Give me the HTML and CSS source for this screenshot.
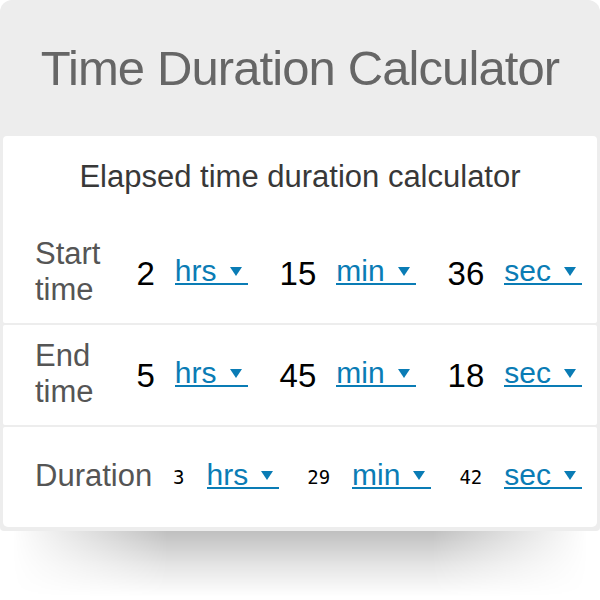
FILE: index.html
```html
<!DOCTYPE html>
<html lang="en">
<head>
    <meta charset="UTF-8">
    <meta name="viewport" content="width=device-width, initial-scale=1.0">
    <title>Time Duration Calculator</title>
    <link rel="stylesheet" href="styles.css">
</head>
<body>

    <div class="calc">
        <div class="calcHeader">
            <h1>Time Duration Calculator</h1>
        </div>

        <div class="calcBody">
            <section class="block blockFirst">
                <p class="subtitle">Elapsed time duration calculator</p>
                <div class="row">
                    <div class="label">Start<br>time</div>
                    <span class="num">2</span>
                    <span class="unit">hrs<i class="caret"></i></span>
                    <span class="num">15</span>
                    <span class="unit">min<i class="caret"></i></span>
                    <span class="num">36</span>
                    <span class="unit">sec<i class="caret"></i></span>
                </div>
            </section>

            <section class="block">
                <div class="row">
                    <div class="label">End<br>time</div>
                    <span class="num">5</span>
                    <span class="unit">hrs<i class="caret"></i></span>
                    <span class="num">45</span>
                    <span class="unit">min<i class="caret"></i></span>
                    <span class="num">18</span>
                    <span class="unit">sec<i class="caret"></i></span>
                </div>
            </section>

            <!-- Result row, numbers are printed smaller -->
            <section class="block">
                <div class="row result">
                    <div class="label">Duration</div>
                    <span class="num small">3</span>
                    <span class="unit">hrs<i class="caret"></i></span>
                    <span class="num small">29</span>
                    <span class="unit">min<i class="caret"></i></span>
                    <span class="num small">42</span>
                    <span class="unit">sec<i class="caret"></i></span>
                </div>
            </section>
        </div>
    </div>

    <!-- soft drop shadow under the widget -->
    <div class="calcShadow"></div>

</body>
</html>
```

FILE: styles.css
```css
body {
    margin: 0;
    background: #ffffff;
    font-family: "Liberation Sans", Arial, sans-serif;
}

.calc {
    height: 531px;
    background: #ededed;
    border-radius: 12px 12px 4px 4px;
    display: flex;
    flex-direction: column;
}

.calcShadow {
    height: 69px;
    background: linear-gradient(to bottom, rgba(0, 0, 0, 0.25), rgba(0, 0, 0, 0.1) 50%, rgba(0, 0, 0, 0) 95%);
    -webkit-mask-image: linear-gradient(to right, transparent 2%, #000 28%, #000 72%, transparent 98%);
    mask-image: linear-gradient(to right, transparent 2%, #000 28%, #000 72%, transparent 98%);
}

.calcHeader {
    height: 136px;
    display: flex;
    justify-content: center;
    align-items: center;
}

.calcHeader h1 {
    margin: 0;
    font-size: 49px;
    font-weight: normal;
    letter-spacing: -0.9px;
    color: #666666;
}

.calcBody {
    display: flex;
    flex-direction: column;
    gap: 2px;
    padding: 0 3px 3px 3px;
}

.block {
    background: #ffffff;
    border-radius: 2px;
}

.blockFirst {
    padding-top: 23px;
    border-radius: 4px 4px 2px 2px;
}

.calcBody .block:last-child {
    border-radius: 2px 2px 5px 5px;
}

.subtitle {
    margin: 0 0 28px 0;
    text-align: center;
    font-size: 31px;
    line-height: 36px;
    color: #383838;
}

.row {
    height: 100px;
    padding: 0 15px 3px 32px;
    box-sizing: border-box;
    display: flex;
    align-items: center;
}

.label {
    margin-right: auto;
    font-size: 31px;
    line-height: 36px;
    color: #555555;
    flex-shrink: 0;
}

.num {
    font-size: 33px;
    line-height: 33px;
    padding-top: 4px;
    color: #000000;
    margin: 0 20px 0 32px;
}

.num.small {
    font-family: "DejaVu Sans Mono", monospace;
    font-size: 19px;
    line-height: 19px;
    padding-top: 3px;
    margin: 0 22px 0 28px;
}

.label + .num.small {
    margin-left: 20px;
}

.unit {
    display: inline-flex;
    align-items: center;
    font-size: 30px;
    line-height: 24px;
    color: #0a7cb5;
    border-bottom: 2px solid #0a7cb5;
    padding-right: 6px;
    cursor: pointer;
}

/* small down arrow after each unit */
.caret {
    width: 0;
    height: 0;
    margin-left: 13px;
    margin-top: 2px;
    border-left: 6px solid transparent;
    border-right: 6px solid transparent;
    border-top: 9px solid #0a7cb5;
}
```
